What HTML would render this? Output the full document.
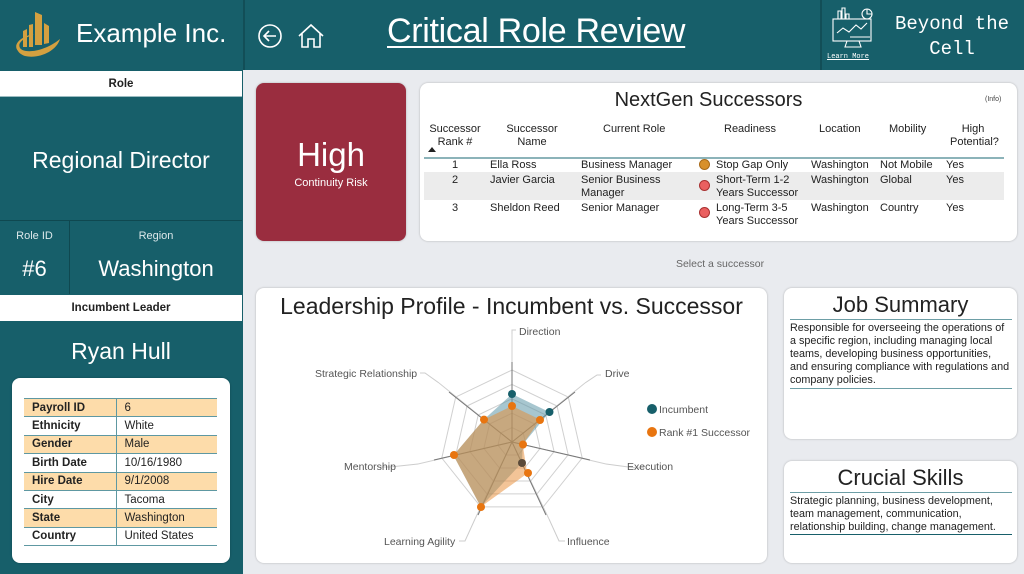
<!DOCTYPE html>
<html><head><meta charset="utf-8"><style>
*{margin:0;padding:0;box-sizing:border-box}
body{width:1024px;height:574px;overflow:hidden;background:#e9ebef;font-family:"Liberation Sans","DejaVu Sans",sans-serif;position:relative;color:#222}
.a{position:absolute}
.teal{background:#175f6a}
.card{position:absolute;background:#fff;border-radius:8px;box-shadow:0 0 2px rgba(0,0,0,.25)}
.w{color:#fff}
.c{text-align:center}
table{border-collapse:collapse}
.pt td{font-size:11.5px;height:18.4px;padding:0 8px;border-bottom:1px solid #5e98a2;color:#222}
.pt td:first-child{font-weight:bold;border-right:1px solid #5e98a2}
.pt tr.o td{background:#fddcaa}
.st{font-size:11px;color:#222}
.dot{position:absolute;width:11px;height:11px;border-radius:50%}
</style></head><body>
<div class="a teal" style="left:0;top:0;width:243px;height:574px"></div>
<div class="a teal" style="left:243px;top:0;width:781px;height:70px;border-left:2px solid #124e57"></div>
<div class="a" style="left:820px;top:0;width:2px;height:70px;background:#124e57"></div>
<svg class="a" style="left:12px;top:9px" width="50" height="48" viewBox="0 0 50 48">
<g fill="#d4a040"><polygon points="11,22 15,20 15,38 11,38"/><polygon points="17,16 21,15 21,38 17,38"/><polygon points="23,3 30,6 30,36 23,36"/><polygon points="32,14 37,17 37,34 32,35"/>
<path d="M6,42 C0,35 10,27 22,25 C13,29 5,33 8,39 C12,45 32,43 48,30 C44,43 26,50 13,47 C10,46 7,44 6,42Z"/></g></svg>
<div class="a w" style="left:76px;top:18px;font-size:26px">Example Inc.</div>
<div class="a c" style="left:0;top:71px;width:242px;height:26px;background:#fff;font-size:11.5px;font-weight:bold;line-height:26px;border-bottom:1px solid #9bbcc1">Role</div>
<div class="a w c" style="left:0;top:147px;width:242px;font-size:23px">Regional Director</div>
<div class="a" style="left:0;top:220px;width:242px;height:1px;background:#0f4850"></div>
<div class="a" style="left:69px;top:220px;width:1px;height:74px;background:#0f4850"></div>
<div class="a c" style="left:0;top:230px;width:69px;font-size:11px;color:#dce8ea">Role ID</div>
<div class="a w c" style="left:0;top:256px;width:69px;font-size:22px">#6</div>
<div class="a c" style="left:70px;top:230px;width:172px;font-size:11px;color:#dce8ea">Region</div>
<div class="a w c" style="left:70px;top:256px;width:172px;font-size:22px">Washington</div>
<div class="a c" style="left:0;top:295px;width:242px;height:26px;background:#fff;font-size:11.5px;font-weight:bold;line-height:26px">Incumbent Leader</div>
<div class="a w c" style="left:0;top:338px;width:242px;font-size:23px">Ryan Hull</div>
<div class="card" style="left:12px;top:378px;width:218px;height:185px"></div>
<table class="a pt" style="left:24px;top:398px;width:193px;border-top:1px solid #5e98a2">
<tr class="o"><td style="width:92px">Payroll ID</td><td>6</td></tr>
<tr><td>Ethnicity</td><td>White</td></tr>
<tr class="o"><td>Gender</td><td>Male</td></tr>
<tr><td>Birth Date</td><td>10/16/1980</td></tr>
<tr class="o"><td>Hire Date</td><td>9/1/2008</td></tr>
<tr><td>City</td><td>Tacoma</td></tr>
<tr class="o"><td>State</td><td>Washington</td></tr>
<tr><td>Country</td><td>United States</td></tr>
</table>
<svg class="a" style="left:257px;top:22px" width="70" height="28" viewBox="0 0 70 28">
<circle cx="13" cy="14" r="11" fill="none" stroke="#fff" stroke-width="1.6"/><path d="M19,14H8M12,9L7,14L12,19" fill="none" stroke="#fff" stroke-width="1.6"/>
<path d="M42,14L54,3L66,14M45,11V25H51V17H57V25H63V11" fill="none" stroke="#fff" stroke-width="1.6"/></svg>
<div class="a w" style="left:387px;top:12px;font-size:34px;letter-spacing:-0.3px;text-decoration:underline;text-decoration-thickness:2px;text-underline-offset:4px">Critical Role Review</div>
<svg class="a" style="left:830px;top:6px" width="46" height="44" viewBox="0 0 46 44" fill="none" stroke="#fff" stroke-width="1.1">
<rect x="3" y="13" width="38" height="22"/><path d="M8,13V5h3v8M12,13V2h3v11M16,13V8h3v5M20,31H40M17,35l-2,6h16l-2-6M7,27l6-5 6,4 7-7 5,4 6-6"/><circle cx="37" cy="8" r="5"/><path d="M37,3v5h5"/></svg>
<div class="a w" style="left:827px;top:53px;font-size:7px;font-family:'Liberation Mono',monospace;text-decoration:underline">Learn More</div>
<div class="a w c" style="left:882px;top:12px;width:140px;font-family:'Liberation Mono',monospace;font-size:19px;line-height:25px">Beyond the<br>Cell</div>
<div class="card" style="left:256px;top:83px;width:150px;height:158px;background:#9a2d3f"></div>
<div class="a w c" style="left:256px;top:136px;width:150px;font-size:33px">High</div>
<div class="a w c" style="left:256px;top:177px;width:150px;font-size:11px">Continuity Risk</div>
<div class="card" style="left:420px;top:83px;width:597px;height:158px"></div>
<div class="a c" style="left:410px;top:89px;width:597px;font-size:20px">NextGen Successors</div>
<div class="a" style="left:985px;top:96px;font-size:7px;color:#444">(Info)</div>
<div class="a st c" style="left:424px;top:123px;width:62px;line-height:13px">Successor<br>Rank #</div>
<div class="a" style="left:428px;top:147px;width:0;height:0;border:4px solid transparent;border-bottom:5px solid #222;border-top:0"></div>
<div class="a st c" style="left:492px;top:123px;width:80px;line-height:13px">Successor<br>Name</div>
<div class="a st" style="left:603px;top:123px">Current Role</div>
<div class="a st" style="left:724px;top:123px">Readiness</div>
<div class="a st" style="left:819px;top:123px">Location</div>
<div class="a st" style="left:889px;top:123px">Mobility</div>
<div class="a st c" style="left:950px;top:123px;width:46px;line-height:13px">High<br>Potential?</div>
<div class="a" style="left:424px;top:157px;width:580px;height:2px;background:#8cb3b9"></div>
<div class="a" style="left:424px;top:172px;width:580px;height:28px;background:#ececec"></div>
<div class="a st" style="left:424px;top:159px;width:580px;line-height:13px">
<div class="a c" style="left:24px;top:0;width:14px">1</div><div class="a" style="left:66px">Ella Ross</div><div class="a" style="left:157px">Business Manager</div><div class="a" style="left:292px">Stop Gap Only</div><div class="a" style="left:387px">Washington</div><div class="a" style="left:456px">Not Mobile</div><div class="a" style="left:522px">Yes</div>
<div class="a c" style="left:24px;top:15px;width:14px">2</div><div class="a" style="left:66px;top:15px">Javier Garcia</div><div class="a" style="left:157px;top:15px">Senior Business<br>Manager</div><div class="a" style="left:292px;top:15px">Short-Term 1-2<br>Years Successor</div><div class="a" style="left:387px;top:15px">Washington</div><div class="a" style="left:456px;top:15px">Global</div><div class="a" style="left:522px;top:15px">Yes</div>
<div class="a c" style="left:24px;top:43px;width:14px">3</div><div class="a" style="left:66px;top:43px">Sheldon Reed</div><div class="a" style="left:157px;top:43px">Senior Manager</div><div class="a" style="left:292px;top:43px">Long-Term 3-5<br>Years Successor</div><div class="a" style="left:387px;top:43px">Washington</div><div class="a" style="left:456px;top:43px">Country</div><div class="a" style="left:522px;top:43px">Yes</div>
</div>
<div class="dot" style="left:699px;top:159px;background:#d8902a;border:1px solid #a86a18"></div>
<div class="dot" style="left:699px;top:180px;background:#ea6060;border:1px solid #a83030"></div>
<div class="dot" style="left:699px;top:207px;background:#ea6060;border:1px solid #a83030"></div>
<div class="a c" style="left:620px;top:258px;width:200px;font-size:10.5px;color:#666">Select a successor</div>
<div class="card" style="left:256px;top:288px;width:511px;height:275px"></div>
<div class="a c" style="left:256px;top:293px;width:511px;font-size:23px">Leadership Profile - Incumbent vs. Successor</div>
<svg class="a" style="left:0;top:0" width="1024" height="574">
<g fill="none" stroke="#d0d0d0" stroke-width="1">
<polygon points="512,370 568.3,397.1 582.2,458 543.2,506.9 480.8,506.9 441.8,458 455.7,397.1"/>
<polygon points="512,384.4 557,406 568.2,454.8 537,493.9 487,493.9 455.8,454.8 467,406"/>
<polygon points="512,398.8 545.8,415 554.1,451.6 530.7,481 493.3,481 469.9,451.6 478.2,415"/>
<polygon points="512,413.2 534.5,424 540.1,448.4 524.5,468 499.5,468 483.9,448.4 489.5,424"/>
<polygon points="512,427.6 523.3,433 526,445.2 518.2,455 505.8,455 498,445.2 500.7,433"/>
<path d="M512,442V334M512,442L585,383M512,442L606,464M512,442L549,519M512,442L475,519M512,442L418,464M512,442L439,383"/>
<path d="M512,334V330h4M585,383L597,375h4M606,464l30,4h8M549,519l10,22h6M475,519l-10,22h-6M418,464l-28,3h-10M439,383l-14,-10h-5" stroke="#ccc"/>
</g>
<g stroke="#777" stroke-width="1"><path d="M512,442V362M512,442L575,392M512,442L590,460M512,442L546,515M512,442L478,515M512,442L434,460M512,442L449,392"/></g>
<polygon points="512,394 549.5,412.1 522.7,444.5 522,462.7 480.8,506.9 453.5,455.4 483.8,419.6" fill="#5e98a8" fill-opacity=".55"/>
<polygon points="512,406 540.2,419.6 522.7,444.5 527.2,473.5 480.8,506.9 453.5,455.4 483.8,419.6" fill="#e88a30" fill-opacity=".5"/>
<g fill="#175f6a"><circle cx="512" cy="394" r="4"/><circle cx="549.5" cy="412" r="4"/><circle cx="522" cy="463" r="4" fill="#5a4a3a"/></g>
<g fill="#e87510"><circle cx="512" cy="406" r="4"/><circle cx="540" cy="420" r="4"/><circle cx="523" cy="444.5" r="4"/><circle cx="528" cy="473" r="4"/><circle cx="481" cy="507" r="4"/><circle cx="454" cy="455" r="4"/><circle cx="484" cy="419.6" r="4"/></g>
<g font-family="Liberation Sans, sans-serif" font-size="10.5" fill="#555">
<text x="519" y="335">Direction</text><text x="605" y="377">Drive</text><text x="627" y="470">Execution</text><text x="567" y="545">Influence</text><text x="384" y="545">Learning Agility</text><text x="344" y="470">Mentorship</text><text x="315" y="377">Strategic Relationship</text>
<circle cx="652" cy="409" r="5" fill="#175f6a"/><text x="659" y="413">Incumbent</text>
<circle cx="652" cy="432" r="5" fill="#e87510"/><text x="659" y="436">Rank #1 Successor</text></g>
</svg>
<div class="card" style="left:784px;top:288px;width:233px;height:151px"></div>
<div class="a c" style="left:784px;top:292px;width:233px;font-size:22px">Job Summary</div>
<div class="a" style="left:790px;top:319px;width:222px;height:1px;background:#6d9ea6"></div>
<div class="a" style="left:790px;top:322px;width:222px;font-size:10.8px;line-height:13px;border-bottom:1px solid #6d9ea6;padding-bottom:1px">Responsible for overseeing the operations of a specific region, including managing local teams, developing business opportunities, and ensuring compliance with regulations and company policies.</div>
<div class="card" style="left:784px;top:461px;width:233px;height:102px"></div>
<div class="a c" style="left:784px;top:465px;width:233px;font-size:22px">Crucial Skills</div>
<div class="a" style="left:790px;top:492px;width:222px;height:1px;background:#6d9ea6"></div>
<div class="a" style="left:790px;top:495px;width:222px;font-size:10.8px;line-height:13px;border-bottom:1px solid #175f6a">Strategic planning, business development, team management, communication, relationship building, change management.</div>
</body></html>
